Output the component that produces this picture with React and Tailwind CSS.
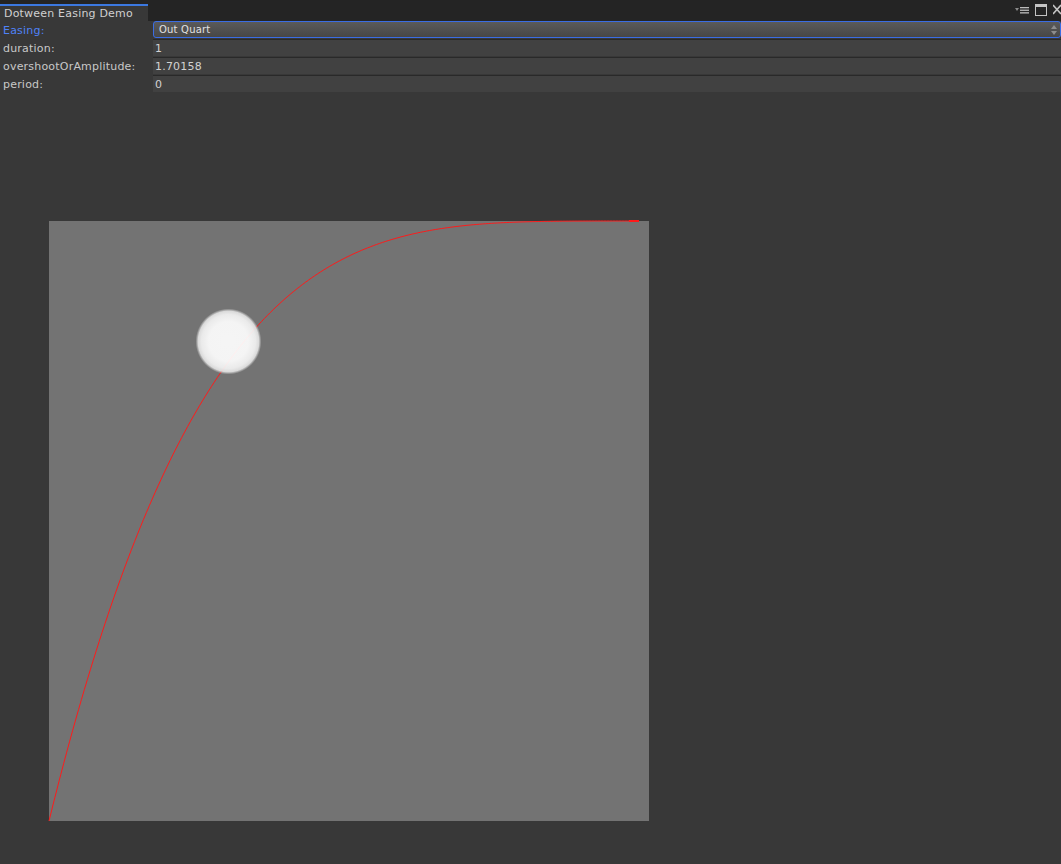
const curve = (() => {
  const pts = [];
  for (let i = 0; i <= 200; i++) {
    const t = i / 200;
    const v = 1 - Math.pow(1 - t, 4);
    pts.push(`${(t * 590).toFixed(2)},${(600 - v * 600).toFixed(2)}`);
  }
  return "M" + pts.join(" L");
})();

function Field({ children }) {
  return (
    <div className="h-[18px] border-t border-[#292929] pb-px">
      <div className="h-full bg-[#414141] px-[2px] leading-[18px] text-[#d2d2d2]">{children}</div>
    </div>
  );
}

function Label({ children, blue }) {
  return (
    <div className={"h-[18px] pl-[3px] leading-[20px] " + (blue ? "text-[#4f82f7]" : "text-[#c8c8c8]")}>
      {children}
    </div>
  );
}

export default function App() {
  return (
    <div
      className="w-[1061px] h-[864px] bg-[#383838] flex flex-col overflow-hidden text-[11px] tracking-[0.2px]"
      style={{ fontFamily: '"DejaVu Sans", "Liberation Sans", sans-serif' }}
    >
      <div className="h-[21px] bg-[#242424] flex items-end shrink-0">
        <div className="w-[148px] h-[17px] border-t-2 border-[#3b78e0] bg-[#383838] pl-[4px] leading-[15px] text-[#d0d0d0]">
          Dotween Easing Demo
        </div>
        <div className="ml-auto self-start flex items-center gap-[6px] pt-[4px] text-[#bdbdbd]">
          <svg width="14" height="8" viewBox="0 0 14 8">
            <path d="M0 2 L4 2 L2 5 Z" fill="#8a8a8a" />
            <rect x="5" y="1" width="9" height="1.3" fill="#bdbdbd" />
            <rect x="5" y="3.6" width="9" height="1.3" fill="#bdbdbd" />
            <rect x="5" y="6.2" width="9" height="1.3" fill="#bdbdbd" />
          </svg>
          <svg width="12" height="12" viewBox="0 0 12 12">
            <rect x="0.5" y="0.5" width="11" height="11" fill="none" stroke="#c4c4c4" />
            <rect x="0.5" y="0.5" width="11" height="2.5" fill="#c4c4c4" />
          </svg>
          <svg width="8" height="12" viewBox="0 0 8 12">
            <path d="M0 1 L8 10 M8 1 L0 10" stroke="#c4c4c4" strokeWidth="1.6" />
          </svg>
        </div>
      </div>

      <div className="grid grid-cols-[153px_1fr] shrink-0">
        <Label blue>Easing:</Label>
        <div className="h-[18px] pb-[1px]">
          <div className="h-full rounded-[3px] border border-[#3a6de4] bg-gradient-to-b from-[#5a5a5a] to-[#474747] pl-[5px] pr-[3px] flex items-center justify-between text-[10px] leading-none text-[#e2e2e2]">
            <span>Out Quart</span>
            <svg width="6" height="10" viewBox="0 0 6 10">
              <path d="M0 4 L3 0 L6 4 Z M0 6 L3 10 L6 6 Z" fill="#8d8d8d" />
            </svg>
          </div>
        </div>

        <Label>duration:</Label>
        <Field>1</Field>
        <Label>overshootOrAmplitude:</Label>
        <Field>1.70158</Field>
        <Label>period:</Label>
        <Field>0</Field>
      </div>

      <div className="mt-[128px] ml-[49px] w-[600px] h-[600px] bg-[#737373] relative shrink-0">
        <svg width="600" height="600" viewBox="0 0 600 600" className="absolute inset-0 overflow-visible">
          <defs>
            <radialGradient id="ball" cx="0.5" cy="0.5" r="0.5">
              <stop offset="0" stopColor="#ffffff" />
              <stop offset="0.6" stopColor="#fefefe" />
              <stop offset="0.82" stopColor="#f3f3f3" />
              <stop offset="0.92" stopColor="#e2e2e2" />
              <stop offset="1" stopColor="#c8c8c8" stopOpacity="0" />
            </radialGradient>
          </defs>
          <path d={curve} fill="none" stroke="#ff1a1a" strokeWidth="1" />
          <rect x="580" y="-1" width="10" height="2" fill="#ff1a1a" />
          <circle cx="179.5" cy="120.5" r="33" fill="url(#ball)" opacity="0.93" />
        </svg>
      </div>
    </div>
  );
}
